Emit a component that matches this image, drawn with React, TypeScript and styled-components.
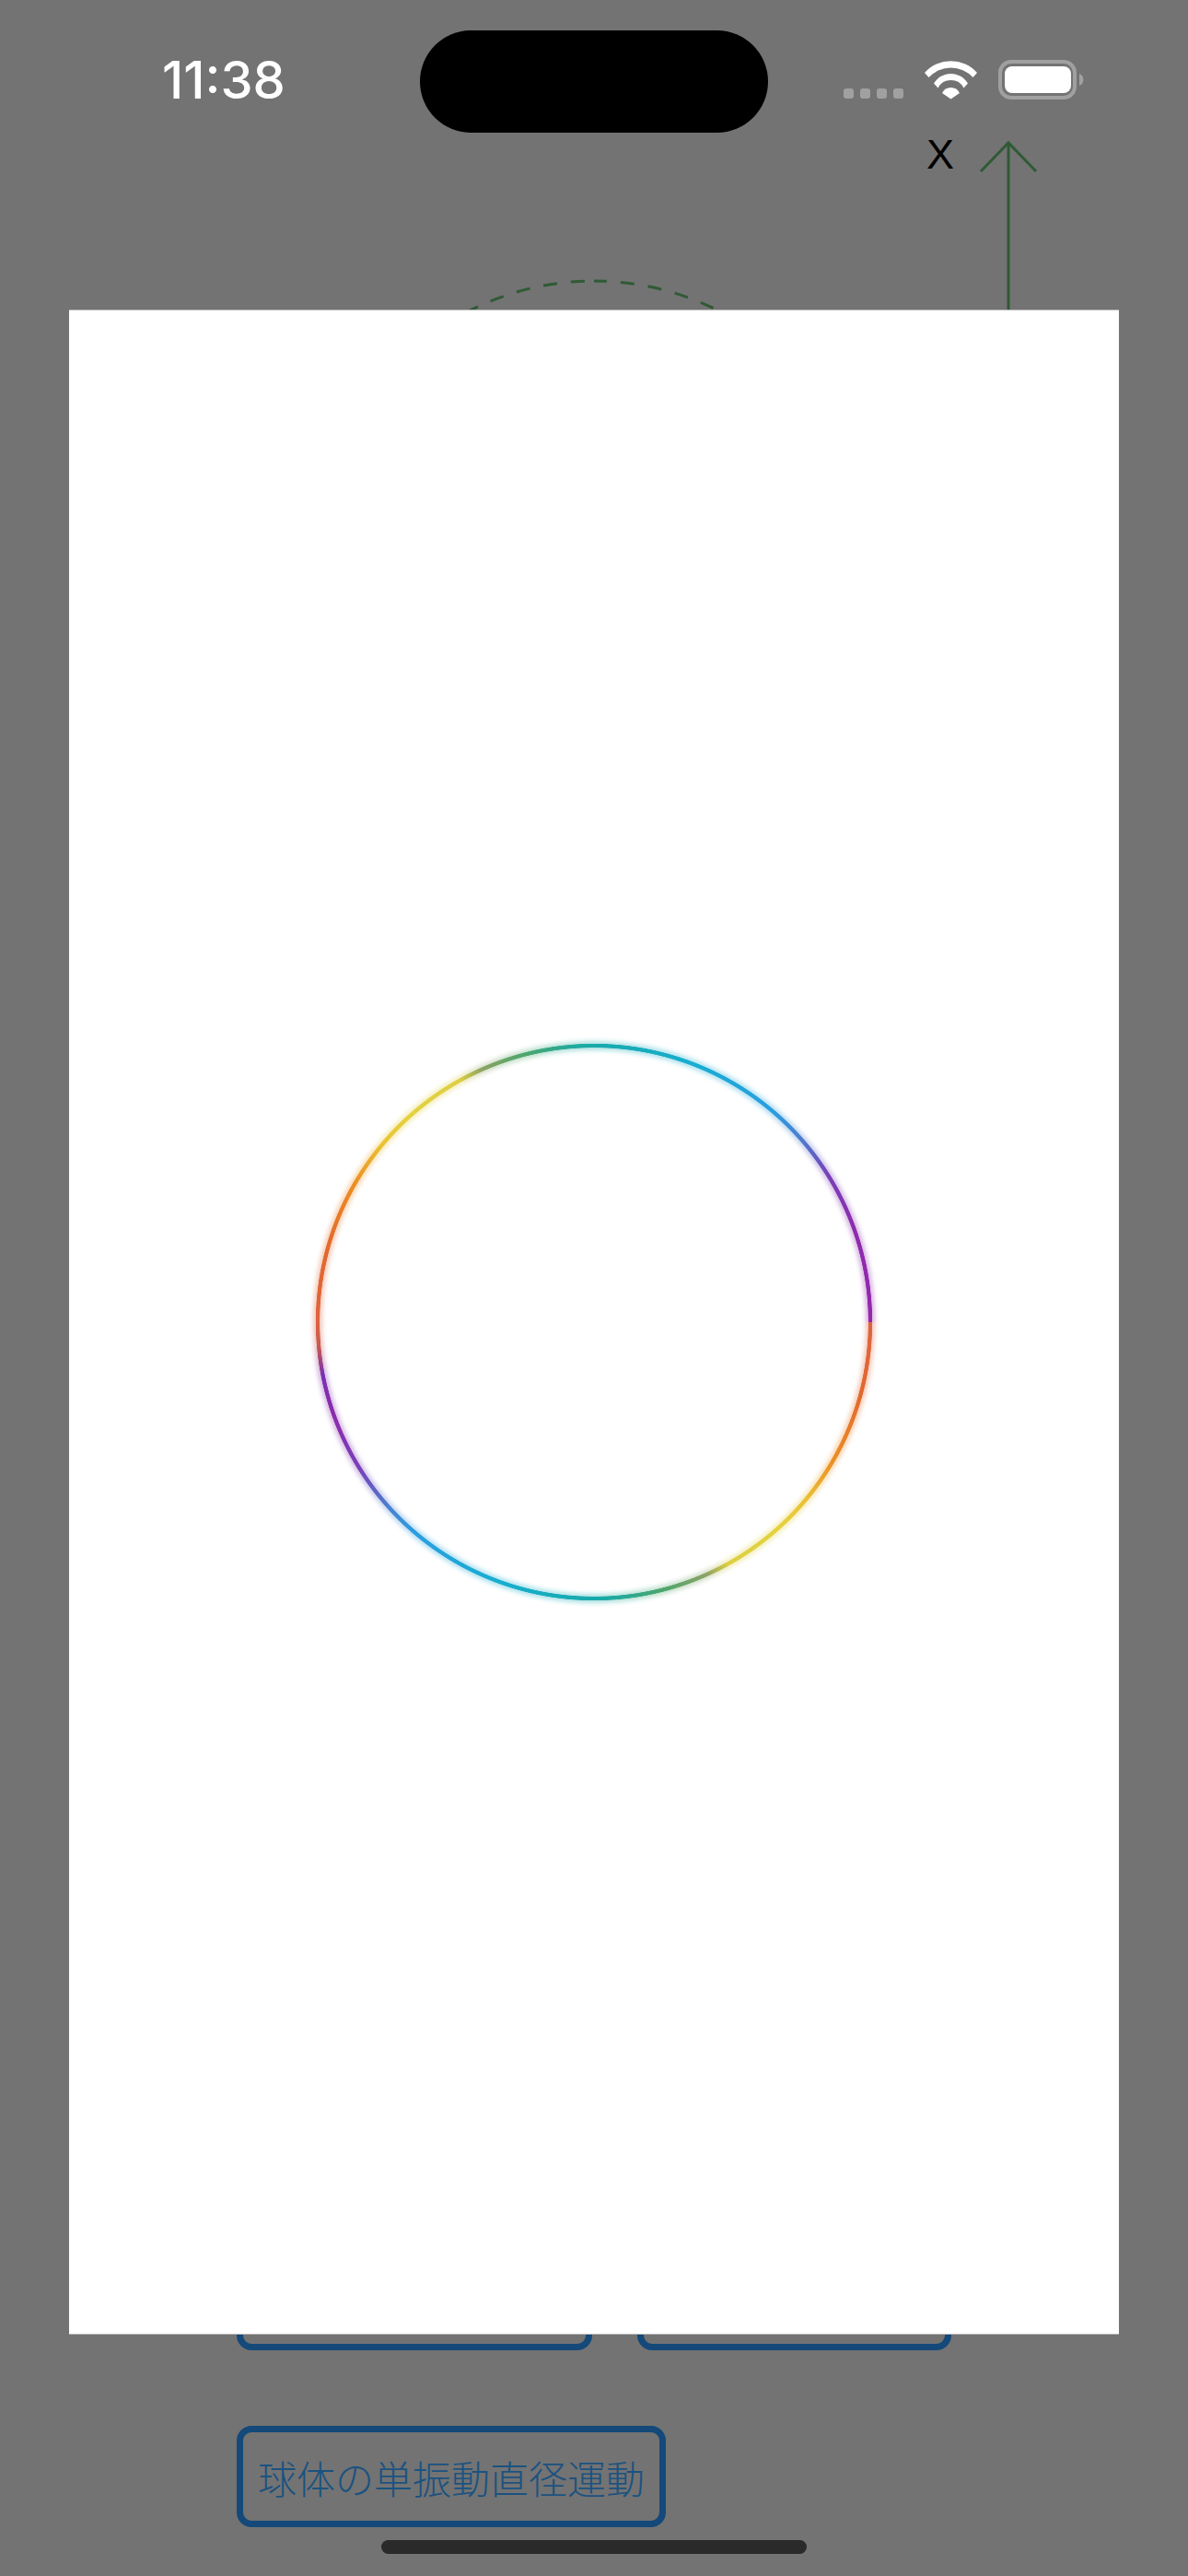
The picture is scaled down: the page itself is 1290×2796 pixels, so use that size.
import React from 'react';
import styled, { createGlobalStyle } from 'styled-components';

const color = {
	dim: '#737373',
	island: '#000000',
	line: '#2f5a35',
	button: '#14497a',
	label: '#1b5280',
	faint: '#a0a0a0',
	indicator: '#2a2a2a',
};

// sweep of the ring, clockwise from 12 o'clock
const half = [
	'#17aaaa 0deg', '#18aed0 20deg', '#2a9fe0 40deg', '#4a80d0 48deg', '#7a40b8 58deg', '#8c2cac 70deg',
];
const warm = [
	'#e2682e 105deg', '#ec8e24 120deg', '#eac234 130deg', '#e4d23e 138deg', '#dccf44 151deg',
	'#8ca464 156deg', '#4aa66e 166deg', '#1faaa0 176deg',
];
const shift = (stops: string[], by: number) =>
	stops.map((s) => {
		const [c, a] = s.split(' ');
		return `${c} ${parseFloat(a) + by}deg`;
	});
const sweep = [
	...half,
	'#9428ac 90deg',
	'#dd6440 90deg',
	...warm,
	...shift(half, 180),
	'#7a30b0 259deg',
	'#c85a50 265deg',
	'#dd6440 270deg',
	...shift(warm, 180),
	'#17aaaa 360deg',
].join(', ');

const Global = createGlobalStyle`
	html, body {
		margin: 0;
		padding: 0;
		background: ${color.dim};
	}
`;

const Screen = styled.div`
	position: relative;
	display: flex;
	flex-direction: column;
	width: 1290px;
	height: 2796px;
	overflow: hidden;
	background: ${color.dim};
`;

const StatusBar = styled.div`
	display: grid;
	grid-template-columns: 456px 378px 1fr;
	flex: none;
	height: 144px;
	padding-top: 33px;
	box-sizing: border-box;
`;

const Time = styled.div`
	padding: 23px 0 0 176px;
	color: #ffffff;
	font-family: Inter, "Liberation Sans", sans-serif;
	font-size: 56px;
	font-weight: 500;
	line-height: 63px;
`;

const Island = styled.div`
	height: 111px;
	border-radius: 55.5px;
	background: ${color.island};
`;

const Indicators = styled.div`
	display: flex;
	align-items: flex-end;
	gap: 23px;
	height: 43px;
	padding: 32px 0 0 82px;
`;

const Dots = styled.div`
	display: flex;
	gap: 7px;
	margin-bottom: 1px;
`;

const Dot = styled.span`
	width: 11px;
	height: 11px;
	border-radius: 3px;
	background: ${color.faint};
`;

const Wifi = styled.svg`
	display: block;
	width: 57px;
	height: 42px;
	fill: #ffffff;
`;

const Battery = styled.svg`
	display: block;
	width: 94px;
	height: 43px;
`;

const Diagram = styled.svg`
	display: block;
	flex: none;
	width: 1290px;
	height: 193px;
	overflow: visible;
`;

const AxisLabel = styled.text`
	fill: #000000;
	font-family: "Liberation Sans", Arial, sans-serif;
	font-size: 45px;
`;

const Buttons = styled.div`
	display: flex;
	flex-direction: column;
	gap: 82px;
	margin-top: auto;
	padding-left: 257px;
`;

const ButtonRow = styled.div`
	display: flex;
	gap: 49px;
`;

const Action = styled.div<{ $width: number }>`
	display: flex;
	align-items: center;
	justify-content: center;
	width: ${(p) => p.$width}px;
	height: 110px;
	box-sizing: border-box;
	border: 7px solid ${color.button};
	border-radius: 16px;
	color: ${color.label};
	font-family: "Noto Sans CJK JP", sans-serif;
	font-size: 42px;
	font-weight: 300;
	white-space: nowrap;
`;

const HomeBar = styled.div`
	flex: none;
	align-self: center;
	width: 462px;
	height: 15px;
	margin: 14px 0 24px;
	border-radius: 7.5px;
	background: ${color.indicator};
`;

const Sheet = styled.div`
	position: absolute;
	top: 336px;
	left: 75px;
	display: flex;
	align-items: center;
	justify-content: center;
	width: 1140px;
	height: 2198px;
	box-sizing: border-box;
	border-top: 1px solid #bcbcbc;
	border-bottom: 1px solid #bcbcbc;
	background: #ffffff;
`;

const Ring = styled.div`
	position: relative;
	width: 640px;
	height: 640px;
`;

const Halo = styled.div`
	position: absolute;
	inset: 0;
	filter: blur(2.5px);
	opacity: 0.36;
`;

const Band = styled.div<{ $inner: number; $outer: number }>`
	position: absolute;
	inset: 0;
	border-radius: 50%;
	background: conic-gradient(${sweep});
	mask: radial-gradient(
		circle at center,
		transparent ${(p) => p.$inner - 0.7}px,
		#000 ${(p) => p.$inner}px,
		#000 ${(p) => p.$outer}px,
		transparent ${(p) => p.$outer + 0.7}px
	);
`;

function WifiIcon() {
	return (
		<Wifi viewBox="0 0 57 42">
			<path d="M0 13 A38 38 0 0 1 57 13 L52.5 18 A32.7 32.7 0 0 0 4.5 18 Z" />
			<path d="M10 24.5 A21.5 21.5 0 0 1 47 24.5 L42.5 29.5 A15.8 15.8 0 0 0 14.5 29.5 Z" />
			<path d="M19 35 A10.5 10.5 0 0 1 38 35 L28.5 41.5 Z" />
		</Wifi>
	);
}

function BatteryIcon() {
	return (
		<Battery viewBox="0 0 94 43">
			<rect x="2" y="2" width="81" height="39" rx="12" fill="none" stroke={color.faint} strokeWidth="4" />
			<rect x="7" y="7" width="72" height="29" rx="8" fill="#ffffff" />
			<path d="M88 15 A7 7 0 0 1 88 28 Z" fill={color.faint} />
		</Battery>
	);
}

export default function App() {
	return (
		<Screen>
			<Global />
			<StatusBar>
				<Time>11:38</Time>
				<Island />
				<Indicators>
					<Dots>
						<Dot />
						<Dot />
						<Dot />
						<Dot />
					</Dots>
					<WifiIcon />
					<BatteryIcon />
				</Indicators>
			</StatusBar>
			<Diagram viewBox="0 144 1290 193">
				<circle cx="645" cy="605" r="300" fill="none" stroke={color.line} strokeWidth="3" strokeDasharray="15 15" strokeDashoffset="1" transform="rotate(-90 645 605)" />
				<path d="M1095 337 V155 M1065 186 L1095 155 L1125 186" fill="none" stroke={color.line} strokeWidth="3" />
				<AxisLabel x="1006" y="183">X</AxisLabel>
			</Diagram>
			<Buttons>
				<ButtonRow>
					<Action $width={386} />
					<Action $width={341} />
				</ButtonRow>
				<ButtonRow>
					<Action $width={466}>球体の単振動直径運動</Action>
				</ButtonRow>
			</Buttons>
			<HomeBar />
			<Sheet>
				<Ring>
					<Halo>
						<Band $inner={295.5} $outer={304.5} />
					</Halo>
					<Band $inner={298.2} $outer={301.8} />
				</Ring>
			</Sheet>
		</Screen>
	);
}
